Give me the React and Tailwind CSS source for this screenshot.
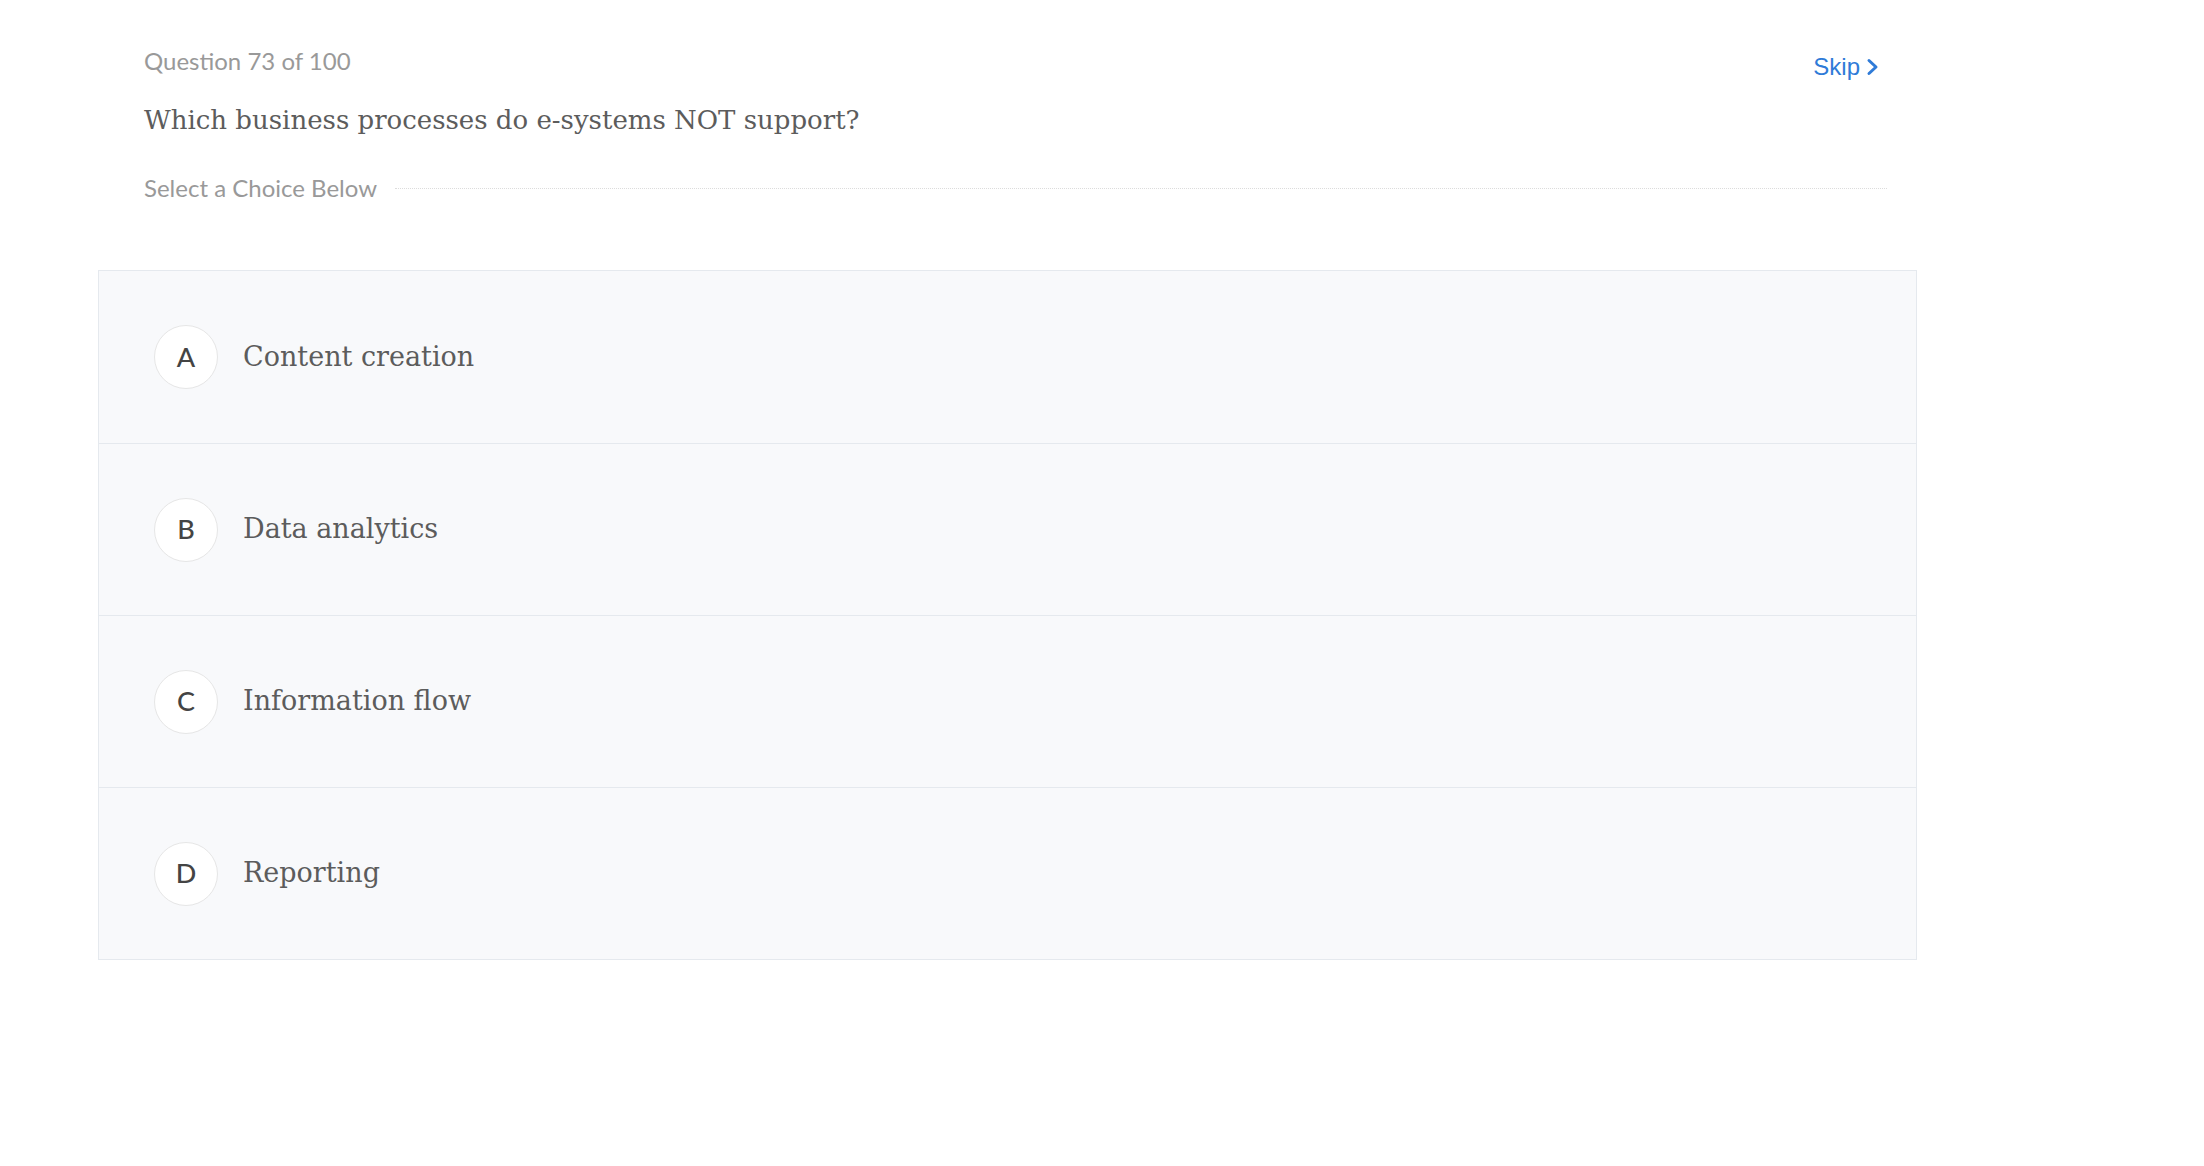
const choices = [
  { letter: 'A', text: 'Content creation' },
  { letter: 'B', text: 'Data analytics' },
  { letter: 'C', text: 'Information flow' },
  { letter: 'D', text: 'Reporting' }
];

const sans = { fontFamily: 'Lato, "Open Sans", sans-serif' };
const serif = { fontFamily: '"DejaVu Serif", "Liberation Serif", serif' };

export default function App() {
  return (
    <div className="min-h-screen bg-white">
      <div className="ml-[98px] w-[1819px] pt-[46px]">
        <header className="pl-[46px] pr-[30px]">
          <div className="flex items-start justify-between">
            <p className="text-[24px] leading-[30px] text-[#999]" style={sans}>
              Question 73 of 100
            </p>
            <button
              className="mr-[8px] mt-[6px] flex h-[30px] items-center gap-[6px] text-[24px] text-[#2f7bd8]"
              style={{ fontFamily: '"Liberation Sans", Arial, sans-serif' }}
              type="button"
            >
              Skip
              <svg width="13" height="18" viewBox="0 0 13 18" fill="none">
                <path d="M3 2.5l7 6.5-7 6.5" stroke="currentColor" strokeWidth="3" strokeLinecap="round" strokeLinejoin="round" />
              </svg>
            </button>
          </div>
          <h1 className="mt-[20px] text-[26px] leading-[36px] text-[#5c5c5c]" style={serif}>
            Which business processes do e-systems NOT support?
          </h1>
          <div className="mt-[35px] flex items-center">
            <span className="text-[24px] leading-[30px] text-[#999]" style={sans}>
              Select a Choice Below
            </span>
            <div className="ml-[18px] flex-1 border-t border-dotted border-[#dcdcdc]" />
          </div>
        </header>

        <section className="mt-[67px] border border-[#e5e9ee] bg-[#f8f9fb]">
          {choices.map((choice, i) => (
            <div
              className={`flex h-[172px] items-center pl-[55px] ${i > 0 ? 'border-t border-[#e5e9ee]' : ''}`}
              key={choice.letter}
            >
              <div
                className="flex h-[64px] w-[64px] items-center justify-center rounded-full border border-[#e6e6e6] bg-white text-[27px] font-medium text-[#444]"
                style={sans}
              >
                {choice.letter}
              </div>
              <span className="ml-[25px] text-[27px] text-[#5c5c5c]" style={serif}>
                {choice.text}
              </span>
            </div>
          ))}
        </section>
      </div>
    </div>
  );
}
